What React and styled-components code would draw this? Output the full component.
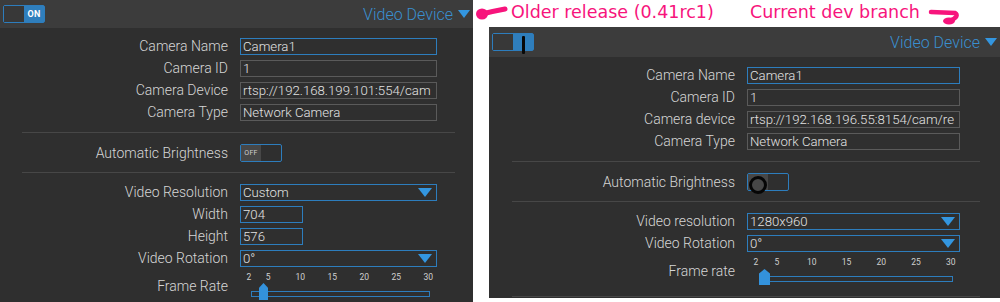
import React from 'react';
import styled, { createGlobalStyle, ThemeProvider } from 'styled-components';

const GlobalStyle = createGlobalStyle`
  html, body {
    margin: 0;
    padding: 0;
    background: #ffffff;
  }
  body {
    font-family: Roboto, "Liberation Sans", sans-serif;
  }
`;

// panel geometry, one theme per screenshot half
const oldTheme = {
  width: 473,
  height: 302,
  top: 0,
  headerH: 28,
  ml: 22,
  mr: 18,
  labelW: 206,
  fieldW: 197,
  scaleH: 11,
  sliderH: 17,
  trackTop: 8,
  trackLeft: 11,
  thumbLeft: 19,
  thumbW: 9,
  tickStart: 9,
  tickStep: 6.4,
};

const devTheme = {
  width: 511,
  height: 271,
  top: 27,
  headerH: 30,
  ml: 23,
  mr: 20,
  labelW: 223,
  fieldW: 213,
  scaleH: 12,
  sliderH: 16,
  trackTop: 7,
  trackLeft: 19,
  thumbLeft: 12,
  thumbW: 11,
  tickStart: 9,
  tickStep: 6.96,
};

const Page = styled.div`
  position: relative;
  display: flex;
  align-items: flex-start;
  gap: 16px;
  width: 1000px;
  height: 302px;
  background: #ffffff;
  overflow: hidden;
`;

const Panel = styled.div`
  display: flex;
  flex-direction: column;
  flex-shrink: 0;
  width: ${(p) => p.theme.width}px;
  height: ${(p) => p.theme.height}px;
  margin-top: ${(p) => p.theme.top}px;
  background: #2f2f2f;
  overflow: hidden;
`;

const Header = styled.div`
  display: flex;
  align-items: center;
  justify-content: space-between;
  flex-shrink: 0;
  height: ${(p) => p.theme.headerH}px;
  padding: 0 3px 0 3px;
  background: #3c3c3c;
`;

const DeviceMenu = styled.div`
  display: flex;
  align-items: center;
  gap: 5px;
  font-size: 16px;
  font-weight: 300;
  color: #3a8fd0;
`;

const Caret = styled.span`
  display: block;
  width: 0;
  height: 0;
  border-left: ${(p) => p.$w / 2}px solid transparent;
  border-right: ${(p) => p.$w / 2}px solid transparent;
  border-top: ${(p) => p.$h}px solid #3396e0;
`;

const Section = styled.div`
  display: grid;
  grid-template-columns: ${(p) => p.theme.labelW}px ${(p) => p.theme.fieldW}px;
  column-gap: 12px;
  row-gap: 5px;
  align-items: center;
  margin: 0 ${(p) => p.theme.mr}px 0 ${(p) => p.theme.ml}px;
  padding: ${(p) => p.$pt}px 0 ${(p) => p.$pb}px;
  border-bottom: 1px solid #474747;
`;

const Label = styled.div`
  font-size: 14px;
  font-weight: 300;
  line-height: 17px;
  color: #d6d6d6;
  text-align: right;
  white-space: nowrap;
`;

const Field = styled.div`
  box-sizing: border-box;
  width: ${(p) => (p.$short ? '63px' : '100%')};
  height: 17px;
  padding: 0 2px;
  border: 1px solid ${(p) => (p.$active ? '#2d7dbd' : '#5a5a5a')};
  font-size: 13.2px;
  font-weight: 300;
  line-height: 15px;
  color: #e2e2e2;
  white-space: nowrap;
  overflow: hidden;
  text-overflow: clip;
`;

const Select = styled(Field)`
  display: flex;
  align-items: center;
  justify-content: space-between;
  padding-right: 4px;
  border-color: #2d7dbd;
`;

const Toggle = styled.div`
  position: relative;
  display: flex;
  box-sizing: border-box;
  width: 42px;
  height: 18px;
  border: 1px solid #2d7dbd;
  border-radius: 2px;
`;

const Half = styled.div`
  flex: 1;
  display: flex;
  align-items: center;
  justify-content: center;
  background: ${(p) =>
    p.$fill === 'blue' ? '#2f7ebc' : p.$fill === 'grey' ? '#474747' : p.$fill === 'dark' ? '#383838' : 'transparent'};
  font-size: ${(p) => (p.$bold ? 9 : 7)}px;
  font-weight: ${(p) => (p.$bold ? 700 : 400)};
  color: ${(p) => (p.$bold ? '#ffffff' : '#d0d0d0')};
  letter-spacing: 0.3px;
`;

// stray knob glitches drawn over the dev-branch switches
const Bar = styled.span`
  position: absolute;
  left: 29px;
  top: 2px;
  width: 3px;
  height: 18px;
  border-radius: 1px;
  background: #080808;
`;

const Ring = styled.span`
  position: absolute;
  left: 1px;
  top: 2px;
  box-sizing: border-box;
  width: 18px;
  height: 18px;
  border: 3px solid #060606;
  border-radius: 50%;
  background: #474747;
`;

const RateField = styled.div`
  display: flex;
  flex-direction: column;
`;

const Scale = styled.div`
  position: relative;
  height: ${(p) => p.theme.scaleH}px;
`;

const Tick = styled.span`
  position: absolute;
  top: 1px;
  transform: translateX(-50%);
  font-size: 8.5px;
  line-height: 9px;
  color: #cfcfcf;
`;

const Slider = styled.div`
  position: relative;
  height: ${(p) => p.theme.sliderH}px;
`;

const Track = styled.div`
  position: absolute;
  top: ${(p) => p.theme.trackTop}px;
  left: ${(p) => p.theme.trackLeft}px;
  right: 7px;
  height: 6px;
  box-sizing: border-box;
  border: 1px solid #2d7dbd;
  background: #2f2f2f;
`;

const Thumb = styled.div`
  position: absolute;
  top: 0;
  left: ${(p) => p.theme.thumbLeft}px;
  width: ${(p) => p.theme.thumbW}px;
  height: 100%;
  background: #3392dc;
  clip-path: polygon(50% 0, 100% 28%, 100% 100%, 0 100%, 0 28%);
`;

const Note = styled.div`
  position: absolute;
  top: 2px;
  left: ${(p) => p.$left}px;
  font-family: "DejaVu Sans", sans-serif;
  font-size: 17.5px;
  line-height: 20px;
  color: #f7147c;
  white-space: nowrap;
`;

const Swoosh = styled.svg`
  position: absolute;
  top: 0;
  left: ${(p) => p.$left}px;
`;

const ticks = [2, 5, 10, 15, 20, 25, 30];

const FrameRate = ({ label, theme }) => (
  <>
    <Label>{label}</Label>
    <RateField>
      <Scale>
        {ticks.map((t) => (
          <Tick key={t} style={{ left: theme.tickStart + (t - 2) * theme.tickStep }}>
            {t}
          </Tick>
        ))}
      </Scale>
      <Slider>
        <Track />
        <Thumb />
      </Slider>
    </RateField>
  </>
);

const OldPanel = () => (
  <ThemeProvider theme={oldTheme}>
    <Panel>
      <Header>
        <Toggle>
          <Half $fill="dark" />
          <Half $fill="blue" $bold>ON</Half>
        </Toggle>
        <DeviceMenu>
          Video Device <Caret $w={13} $h={8} />
        </DeviceMenu>
      </Header>

      <Section $pt={10} $pb={11}>
        <Label>Camera Name</Label>
        <Field $active>Camera1</Field>
        <Label>Camera ID</Label>
        <Field>1</Field>
        <Label>Camera Device</Label>
        <Field>rtsp://192.168.199.101:554/cam</Field>
        <Label>Camera Type</Label>
        <Field>Network Camera</Field>
      </Section>

      <Section $pt={11} $pb={10}>
        <Label>Automatic Brightness</Label>
        <Toggle>
          <Half $fill="grey">OFF</Half>
          <Half />
        </Toggle>
      </Section>

      <Section $pt={11} $pb={11}>
        <Label>Video Resolution</Label>
        <Select>
          Custom <Caret $w={15} $h={9} />
        </Select>
        <Label>Width</Label>
        <Field $short $active>704</Field>
        <Label>Height</Label>
        <Field $short $active>576</Field>
        <Label>Video Rotation</Label>
        <Select>
          0° <Caret $w={15} $h={9} />
        </Select>
        <FrameRate label="Frame Rate" theme={oldTheme} />
      </Section>
    </Panel>
  </ThemeProvider>
);

const DevPanel = () => (
  <ThemeProvider theme={devTheme}>
    <Panel>
      <Header>
        <Toggle>
          <Half $fill="dark" />
          <Half $fill="blue" />
          <Bar />
        </Toggle>
        <DeviceMenu>
          Video Device <Caret $w={13} $h={8} />
        </DeviceMenu>
      </Header>

      <Section $pt={10} $pb={11}>
        <Label>Camera Name</Label>
        <Field $active>Camera1</Field>
        <Label>Camera ID</Label>
        <Field>1</Field>
        <Label>Camera device</Label>
        <Field>rtsp://192.168.196.55:8154/cam/re</Field>
        <Label>Camera Type</Label>
        <Field>Network Camera</Field>
      </Section>

      <Section $pt={11} $pb={10}>
        <Label>Automatic Brightness</Label>
        <Toggle>
          <Half $fill="grey" />
          <Half />
          <Ring />
        </Toggle>
      </Section>

      <Section $pt={11} $pb={11}>
        <Label>Video resolution</Label>
        <Select>
          1280x960 <Caret $w={15} $h={9} />
        </Select>
        <Label>Video Rotation</Label>
        <Select>
          0° <Caret $w={15} $h={9} />
        </Select>
        <FrameRate label="Frame rate" theme={devTheme} />
      </Section>
    </Panel>
  </ThemeProvider>
);

const App = () => (
  <>
    <GlobalStyle />
    <Page>
      <OldPanel />
      <DevPanel />

      <Swoosh $left={474} width="36" height="26" viewBox="0 0 36 26">
        <ellipse cx="8" cy="14" rx="6" ry="5.5" fill="#f7147c" />
        <path d="M8 14 Q20 11 31 9" stroke="#f7147c" strokeWidth="5" strokeLinecap="round" fill="none" />
      </Swoosh>
      <Note $left={511}>Older release (0.41rc1)</Note>

      <Note $left={750}>Current dev branch</Note>
      <Swoosh $left={926} width="40" height="27" viewBox="0 0 40 27">
        <path d="M5 12 L29 13 Q34 16 24 21" stroke="#f7147c" strokeWidth="4.5" strokeLinecap="round" fill="none" />
        <ellipse cx="23" cy="21" rx="6" ry="3.5" fill="#f7147c" />
      </Swoosh>
    </Page>
  </>
);

export default App;
